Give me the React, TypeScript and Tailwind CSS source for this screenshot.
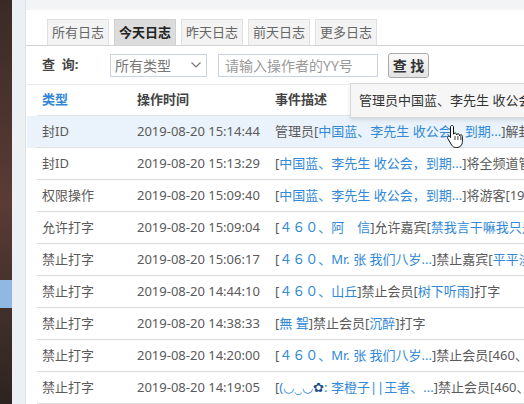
import React from "react";

const font = { fontFamily: '"Noto Sans", "Noto Sans CJK SC", sans-serif' };

type Seg = { t: string; blue?: boolean; sym?: boolean };

const rows: { type: string; time: string; desc: Seg[]; hl?: boolean }[] = [
  {
    type: "封ID",
    time: "2019-08-20 15:14:44",
    hl: true,
    desc: [{ t: "管理员[" }, { t: "中国蓝、李先生 收公会，到期...", blue: true }, { t: "]解封ID" }],
  },
  {
    type: "封ID",
    time: "2019-08-20 15:13:29",
    desc: [{ t: "[" }, { t: "中国蓝、李先生 收公会，到期...", blue: true }, { t: "]将全频道管理" }],
  },
  {
    type: "权限操作",
    time: "2019-08-20 15:09:40",
    desc: [{ t: "[" }, { t: "中国蓝、李先生 收公会，到期...", blue: true }, { t: "]将游客[194" }],
  },
  {
    type: "允许打字",
    time: "2019-08-20 15:09:04",
    desc: [{ t: "[" }, { t: "４６０、阿　信", blue: true }, { t: "]允许嘉宾[" }, { t: "禁我言干嘛我只是", blue: true }],
  },
  {
    type: "禁止打字",
    time: "2019-08-20 15:06:17",
    desc: [{ t: "[" }, { t: "４６０、Mr. 张 我们八岁...", blue: true }, { t: "]禁止嘉宾[" }, { t: "平平淡淡", blue: true }],
  },
  {
    type: "禁止打字",
    time: "2019-08-20 14:44:10",
    desc: [{ t: "[" }, { t: "４６０、山丘", blue: true }, { t: "]禁止会员[" }, { t: "树下听雨", blue: true }, { t: "]打字" }],
  },
  {
    type: "禁止打字",
    time: "2019-08-20 14:38:33",
    desc: [{ t: "[" }, { t: "無 聟", blue: true }, { t: "]禁止会员[" }, { t: "沉醉", blue: true }, { t: "]打字" }],
  },
  {
    type: "禁止打字",
    time: "2019-08-20 14:20:00",
    desc: [{ t: "[" }, { t: "４６０、Mr. 张 我们八岁...", blue: true }, { t: "]禁止会员[460、" }, { t: "李", blue: true }],
  },
  {
    type: "禁止打字",
    time: "2019-08-20 14:19:05",
    desc: [
      { t: "[" },
      { t: "(◡‿◡", blue: true },
      { t: "✿", sym: true },
      { t: ": 李橙子||王者、...", blue: true },
      { t: "]禁止会员[460、" },
      { t: "李", blue: true },
    ],
  },
];

const tabs = ["所有日志", "今天日志", "昨天日志", "前天日志", "更多日志"];

function HandCursor() {
  return (
    <svg width="20" height="24" viewBox="0 0 20 24" className="absolute left-[446px] top-[124px]">
      <path
        d="M6 1.5c.9 0 1.5.6 1.5 1.5v7.2c.2-.8.8-1.2 1.5-1.2.9 0 1.5.6 1.5 1.5v.4c.2-.7.8-1.1 1.5-1.1.9 0 1.5.6 1.5 1.5v.6c.2-.6.8-1 1.4-1 .9 0 1.5.6 1.5 1.5v5.1c0 3.5-2.3 6-5.6 6H9.8c-1.8 0-3-.8-4-2.2L1.8 14.6c-.5-.8-.3-1.7.4-2.1.7-.4 1.5-.2 2 .5l.3.5V3c0-.9.6-1.5 1.5-1.5z"
        fill="#fff"
        stroke="#111"
        strokeWidth="1"
      />
      <path d="M9 12v4M11.9 12v4M14.8 12v4" stroke="#111" strokeWidth="0.8" />
    </svg>
  );
}

export default function App() {
  return (
    <div className="relative flex w-[524px] h-[404px] overflow-hidden bg-white text-[13px]" style={font}>
      {/* left edge: dark background + sidebar */}
      <div className="flex flex-col w-[12px] shrink-0 bg-gradient-to-b from-[#3a2a26] via-[#5a3c34] to-[#2c2422]">
        <div className="h-[280px]" />
        <div className="h-[28px] bg-[#8fb9e3]" />
      </div>
      <div className="w-[14px] shrink-0 bg-[#eceff3] border-r border-[#dde2e8]" />

      {/* main panel */}
      <div className="flex-1 flex flex-col min-w-0">
        <div className="h-[10px] bg-[#f3f4f6]" />

        {/* tabs */}
        <div className="flex gap-[5px] pl-[21px] pt-[9px] border-b border-[#d4d4d4]">
          {tabs.map((t, i) => (
            <div
              key={t}
              className={
                "w-[62px] h-[26px] flex items-center justify-center border border-b-0 " +
                (i === 1
                  ? "bg-[#dcdcdc] border-[#d0d0d0] text-[#222] font-semibold"
                  : "bg-[#f3f3f3] border-[#e0e0e0] text-[#666]")
              }
            >
              {t}
            </div>
          ))}
        </div>

        {/* query row */}
        <div className="flex items-center h-[39px] pl-[16px] border-b border-[#ececec]">
          <span className="w-[68px] font-bold text-[#444]">查&nbsp;&nbsp;询:</span>
          <div className="flex items-center justify-between w-[97px] h-[23px] border border-[#c9d3dd] px-[4px] text-[#777] text-[14px]">
            <span>所有类型</span>
            <svg width="12" height="8" viewBox="0 0 12 8">
              <path d="M1.5 1.5 6 6l4.5-4.5" fill="none" stroke="#777" strokeWidth="1.2" />
            </svg>
          </div>
          <div className="ml-[11px] flex items-center w-[160px] h-[23px] border border-[#c9d3dd] px-[6px] text-[#999] text-[14px]">
            请输入操作者的YY号
          </div>
          <button className="ml-[10px] w-[41px] h-[25px] rounded-[3px] border border-[#a9a9a9] bg-gradient-to-b from-[#fafafa] to-[#e3e3e3] font-bold text-[#333] text-[14px]">
            查 找
          </button>
        </div>

        {/* table */}
        <div className="flex flex-col pl-[1px]">
          <div className="flex items-center h-[31px] ml-[10px] border-b border-[#e3e3e3] font-bold">
            <span className="w-[100px] pl-[5px] text-[#2f86d4]">类型</span>
            <span className="w-[138px] text-[#444]">操作时间</span>
            <span className="text-[#444]">事件描述</span>
          </div>
          {rows.map((r, i) => (
            <div
              key={i}
              className={"flex items-center h-[32px] whitespace-nowrap " + (r.hl ? "bg-[#eaf3fb]" : "")}
            >
              <div className="flex items-center h-full flex-1 ml-[10px] border-b border-[#dedede] text-[#5a5a5a]">
                <span className="w-[100px] shrink-0 pl-[5px]">{r.type}</span>
                <span className="w-[138px] shrink-0">{r.time}</span>
                <span className="overflow-hidden">
                  {r.desc.map((s, j) => (
                    <span
                      key={j}
                      className={
                        s.sym
                          ? "text-[#1f4f8a] font-['DejaVu_Sans',sans-serif]"
                          : s.blue
                            ? "text-[#3189d8]"
                            : ""
                      }
                    >
                      {s.t}
                    </span>
                  ))}
                </span>
              </div>
            </div>
          ))}
        </div>
      </div>

      {/* tooltip */}
      <div className="absolute left-[350px] top-[83px] w-[190px] h-[35px] flex items-center pl-[8px] bg-[#f6f6f6] border border-[#d8d8d8] shadow-[0_2px_4px_rgba(0,0,0,0.12)] text-[#333] whitespace-nowrap">
        管理员中国蓝、李先生 收公会
      </div>

      <HandCursor />
    </div>
  );
}
